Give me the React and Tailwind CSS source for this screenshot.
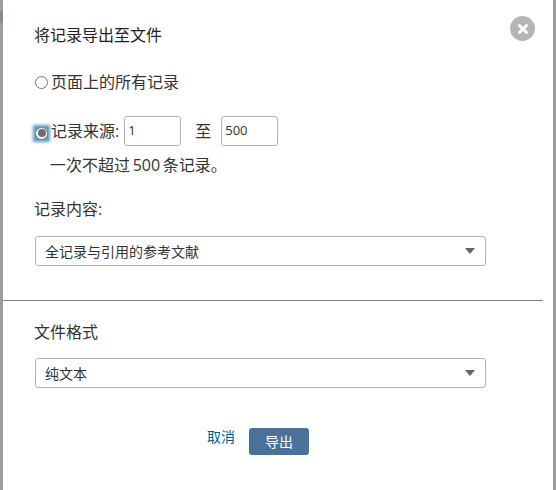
import { X } from 'lucide-react';

const font = { fontFamily: '"Open Sans", "Noto Sans CJK SC", sans-serif' };

const Radio = ({ checked }) => (
  <span className={`w-[13px] h-[13px] flex items-center justify-center shrink-0 ${checked ? 'mt-[4px] bg-[#5b9fc0] shadow-[0_0_3px_2px_#5b9fc0]' : ''}`}>
    <span className="w-[13px] h-[13px] rounded-full border border-[#767676] bg-white flex items-center justify-center">
      {checked && <span className="w-[8px] h-[8px] rounded-full bg-[#6d6d6d]" />}
    </span>
  </span>
);

const SelectBox = ({ value }) => (
  <div className="w-[451px] h-[30px] border border-[#b3b3b3] rounded-[3px] flex items-center justify-between pl-[9px] pr-[10px] text-[14px] text-[#333]">
    <span>{value}</span>
    <span className="w-0 h-0 border-l-[5.5px] border-r-[5.5px] border-t-[6px] border-l-transparent border-r-transparent border-t-[#5f6670]" />
  </div>
);

const NumInput = ({ value, className }) => (
  <div className={`h-[30px] border border-[#b3b3b3] rounded-[3px] flex items-center pl-[3px] text-[13px] text-[#333] ${className}`}>
    {value}
  </div>
);

export default function App() {
  return (
    <div style={font} className="relative w-[556px] h-[490px] bg-white border-l-[3px] border-r-[3px] border-[#9c9c9c] text-[#333]">
      {/* sliver of the page behind the dialog */}
      <div className="absolute -left-[3px] top-[11px] w-[3px] h-[12px] bg-[#8f8a7c]" />

      <button className="absolute right-[18px] top-[16px] w-[25px] h-[25px] rounded-full bg-[#b5b5b5] flex items-center justify-center text-white">
        <X size={14} strokeWidth={5} />
      </button>

      <div className="pl-[32px] pt-[24px]">
        <h1 className="-ml-px text-[16px] leading-[22px] font-normal text-[#222]">将记录导出至文件</h1>

        <div className="flex items-center mt-[25px] h-[22px] text-[16px]">
          <Radio />
          <span className="ml-[3px]">页面上的所有记录</span>
        </div>

        <div className="flex items-center mt-[23px] h-[30px] text-[16px]">
          <Radio checked />
          <span className="ml-[3px]">记录来源:</span>
          <NumInput value="1" className="w-[57px] ml-[5px]" />
          <span className="ml-[14px]">至</span>
          <NumInput value="500" className="w-[57px] ml-[10px]" />
        </div>

        <p className="ml-[15px] mt-[8px] text-[16px] leading-[22px] [word-spacing:-1.5px]">一次不超过 500 条记录。</p>

        <p className="-ml-px mt-[22px] text-[16px] leading-[22px]">记录内容:</p>
        <div className="mt-[16px]">
          <SelectBox value="全记录与引用的参考文献" />
        </div>
      </div>

      <div className="h-px bg-[#808080] w-[540px] mt-[34px]" />

      <div className="pl-[32px] pt-[20px]">
        <p className="-ml-px text-[16px] leading-[22px]">文件格式</p>
        <div className="mt-[15px]">
          <SelectBox value="纯文本" />
        </div>

        <div className="flex items-start mt-[40px] ml-[172px]">
          <a className="text-[14px] leading-[18px] text-[#00608f]">取消</a>
          <button className="ml-[14px] w-[60px] h-[27px] rounded-[3px] bg-[#4a7299] text-white text-[14px]">导出</button>
        </div>
      </div>
    </div>
  );
}
